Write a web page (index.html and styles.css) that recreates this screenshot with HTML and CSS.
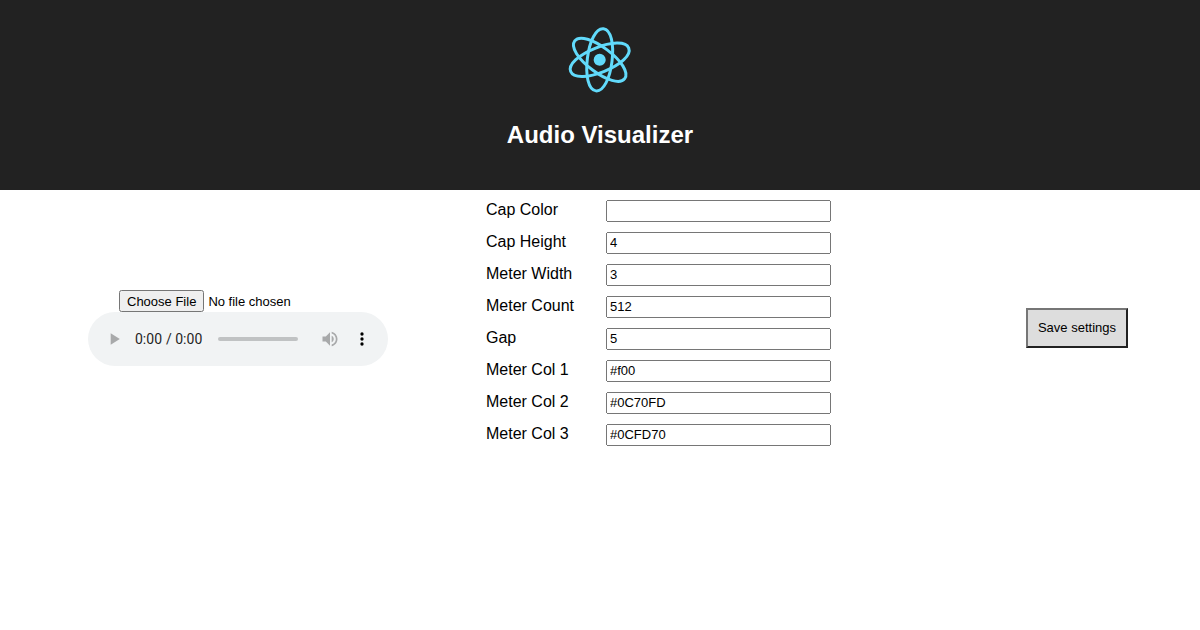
FILE: index.html
```html
<!DOCTYPE html>
<html lang="en">
<head>
<meta charset="utf-8">
<meta name="viewport" content="width=device-width, initial-scale=1">
<title>Audio Visualizer</title>
<link rel="stylesheet" href="styles.css">
</head>
<body>
<header class="header">
  <svg class="logo" viewBox="0 0 80 80" aria-hidden="true">
    <defs>
      <path id="orbit" d="M-31.3 0C-31.3 -7.6 -17.3 -12.4 0 -12.4S31.3 -7.6 31.3 0S17.3 12.4 0 12.4S-31.3 7.6 -31.3 0Z"/>
    </defs>
    <g transform="translate(39.7 39.8) rotate(-23)" fill="none" stroke="#61dafb" stroke-width="3">
      <use href="#orbit" transform="rotate(1)"/>
      <use href="#orbit" transform="rotate(60)"/>
      <use href="#orbit" transform="rotate(120)"/>
      <circle r="6" fill="#61dafb" stroke="none"/>
    </g>
  </svg>
  <h2 class="title">Audio Visualizer</h2>
</header>
<main class="panel">
  <section class="source">
    <input class="file" type="file" accept="audio/*" aria-label="Audio file">
    <audio class="player" controls></audio>
  </section>
  <form class="settings" id="settings">
    <label class="name" for="cap-color">Cap Color</label><input class="field" id="cap-color" type="text">
    <label class="name" for="cap-height">Cap Height</label><input class="field" id="cap-height" type="text" value="4">
    <label class="name" for="meter-width">Meter Width</label><input class="field" id="meter-width" type="text" value="3">
    <label class="name" for="meter-count">Meter Count</label><input class="field" id="meter-count" type="text" value="512">
    <label class="name" for="gap">Gap</label><input class="field" id="gap" type="text" value="5">
    <label class="name" for="col-1">Meter Col 1</label><input class="field" id="col-1" type="text" value="#f00">
    <label class="name" for="col-2">Meter Col 2</label><input class="field" id="col-2" type="text" value="#0C70FD">
    <label class="name" for="col-3">Meter Col 3</label><input class="field" id="col-3" type="text" value="#0CFD70">
  </form>
  <div class="actions">
    <button class="save" type="submit" form="settings">Save settings</button>
  </div>
</main>
</body>
</html>
```
FILE: styles.css
```css
body {
  margin: 0;
  font-family: "Helvetica Neue", Helvetica, "Liberation Sans", Arial, sans-serif;
}

.header {
  box-sizing: border-box;
  min-height: 190px;
  padding: 20px;
  background: #222;
  color: #fff;
  text-align: center;
}

.logo {
  display: block;
  height: 80px;
  margin: 0 auto;
}

.title {
  margin: 20px 0;
  font-size: 24px;
  line-height: 30px;
}

.panel {
  display: flex;
  align-items: center;
  gap: 98px;
  padding: 10px 72px 10px 88px;
}

.source {
  display: flex;
  flex-direction: column;
  align-items: center;
}

.file,
.field,
.save {
  font-family: inherit;
  font-size: 13px;
}

.file {
  width: 238px;
  height: 22px;
}

.file::file-selector-button {
  height: 22px;
  font-size: 13px;
}

.player {
  width: 300px;
  height: 54px;
}

.settings {
  display: grid;
  grid-template-columns: 120px 225px;
  row-gap: 10px;
  padding-bottom: 10px;
}

.name {
  font-size: 16px;
  line-height: 20px;
}

.field {
  box-sizing: border-box;
  width: 100%;
  height: 22px;
  padding: 1px 2px 3px;
}

.actions {
  margin-left: auto;
}

.save {
  height: 40px;
  padding: 0 10px 2px;
  border: 2px solid;
  border-color: #767676 #212121 #212121 #767676;
  background: #ddd;
}
```
